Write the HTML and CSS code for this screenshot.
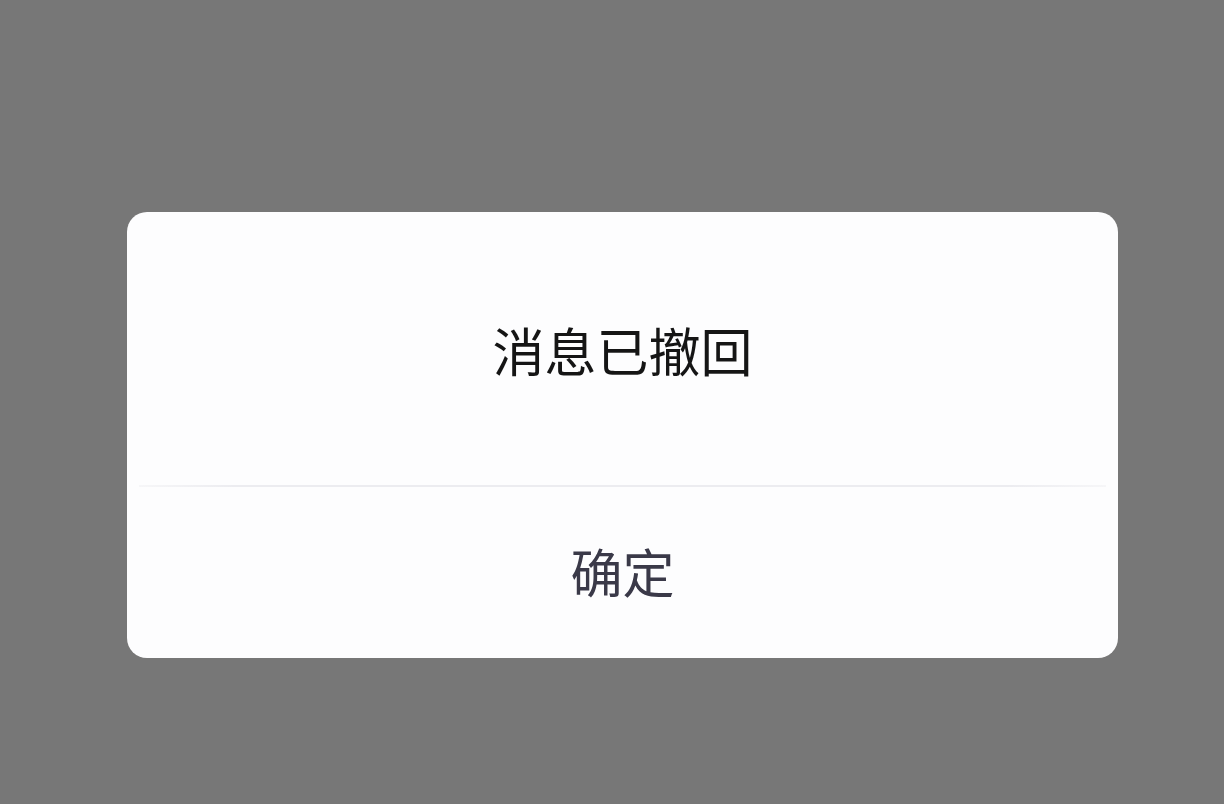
FILE: index.html
```html
<!DOCTYPE html>
<html lang="zh">
<head>
<meta charset="utf-8">
<title>消息已撤回</title>
<link rel="stylesheet" href="styles.css">
</head>
<body>
<div class="overlay">
  <div class="dialog">
    <div class="dialog-body">
      <div class="dialog-title">消息已撤回</div>
    </div>
    <div class="divider"></div>
    <div class="dialog-footer">
      <div class="dialog-btn">确定</div>
    </div>
  </div>
</div>
</body>
</html>
```

FILE: styles.css
```css
html, body {
  margin: 0;
  padding: 0;
  width: 1224px;
  height: 804px;
  background: #777777;
  overflow: hidden;
}
.overlay {
  padding-top: 212px;
  padding-left: 127px;
}
.dialog {
  width: 991px;
  height: 446px;
  background: #fdfdfe;
  border-radius: 20px;
  display: flex;
  flex-direction: column;
  font-family: "Noto Sans CJK SC", "Noto Sans", sans-serif;
}
.dialog-body {
  height: 273px;
  display: flex;
  align-items: center;
  justify-content: center;
}
.dialog-title {
  font-size: 52px;
  line-height: 1;
  color: #151515;
  font-weight: 400;
  padding-top: 2px;
}
.divider {
  height: 2px;
  margin: 0 12px;
  background: linear-gradient(to right, rgba(230,230,234,0.3), #ececf0 10%, #ececf0 90%, rgba(230,230,234,0.3));
}
.dialog-footer {
  flex: 1;
  display: flex;
  align-items: center;
  justify-content: center;
}
.dialog-btn {
  font-size: 52px;
  line-height: 1;
  color: #3a3948;
  font-weight: 400;
  padding-bottom: 4px;
}
```
